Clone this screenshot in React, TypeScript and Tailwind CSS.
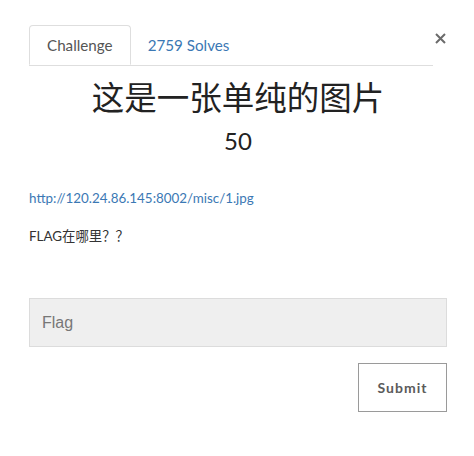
import React from 'react';

export default function App() {
  return (
    <div className="w-[474px] h-[456px] bg-white px-[27px] pl-[29px] pt-[25px] font-['Lato','Noto_Sans_CJK_SC',sans-serif]">
      <div className="flex items-start">
        <ul className="flex flex-1 border-b border-[#dedede]">
          <li className="-mb-px h-[40px] pl-[17px] pr-[17px] flex items-center bg-white border border-[#dedede] border-b-white rounded-t-[4px] text-[15.2px] text-[#555]">
            Challenge
          </li>
          <li className="h-[40px] px-[17px] flex items-center text-[15.2px] text-[#3b78b4]">
            2759 Solves
          </li>
        </ul>
        <button className="w-[14px] h-[26px] flex items-center justify-center text-[#666]">
          <svg width="11" height="11" viewBox="0 0 11 11">
            <path d="M1 1L10 10M10 1L1 10" stroke="#6b6b6b" strokeWidth="2" />
          </svg>
        </button>
      </div>

      <h2 className="mt-[12px] text-center text-[32.5px] leading-[39px] text-[#222]">这是一张单纯的图片</h2>
      <h3 className="mt-[9px] text-center text-[24px] leading-[30px] text-[#222]">50</h3>

      <p className="mt-[32px] text-[13.4px] leading-[20px]">
        <a className="text-[#3b78b4]">http://120.24.86.145:8002/misc/1.jpg</a>
      </p>
      <p className="mt-[18px] text-[13.4px] leading-[20px] text-[#333]">FLAG在哪里？？</p>

      <input
        className="mt-[52px] block w-full h-[49px] bg-[#efefef] border border-[#dcdcdc] px-[12px] text-[16px] font-['Liberation_Sans',sans-serif] placeholder:text-[#777] outline-none"
        placeholder="Flag"
      />
      <div className="mt-[16px] flex justify-end">
        <button className="w-[89px] h-[49px] border border-[#9a9a9a] bg-white text-[14px] font-bold tracking-[1px] text-[#5b5b5b]">
          Submit
        </button>
      </div>
    </div>
  );
}
